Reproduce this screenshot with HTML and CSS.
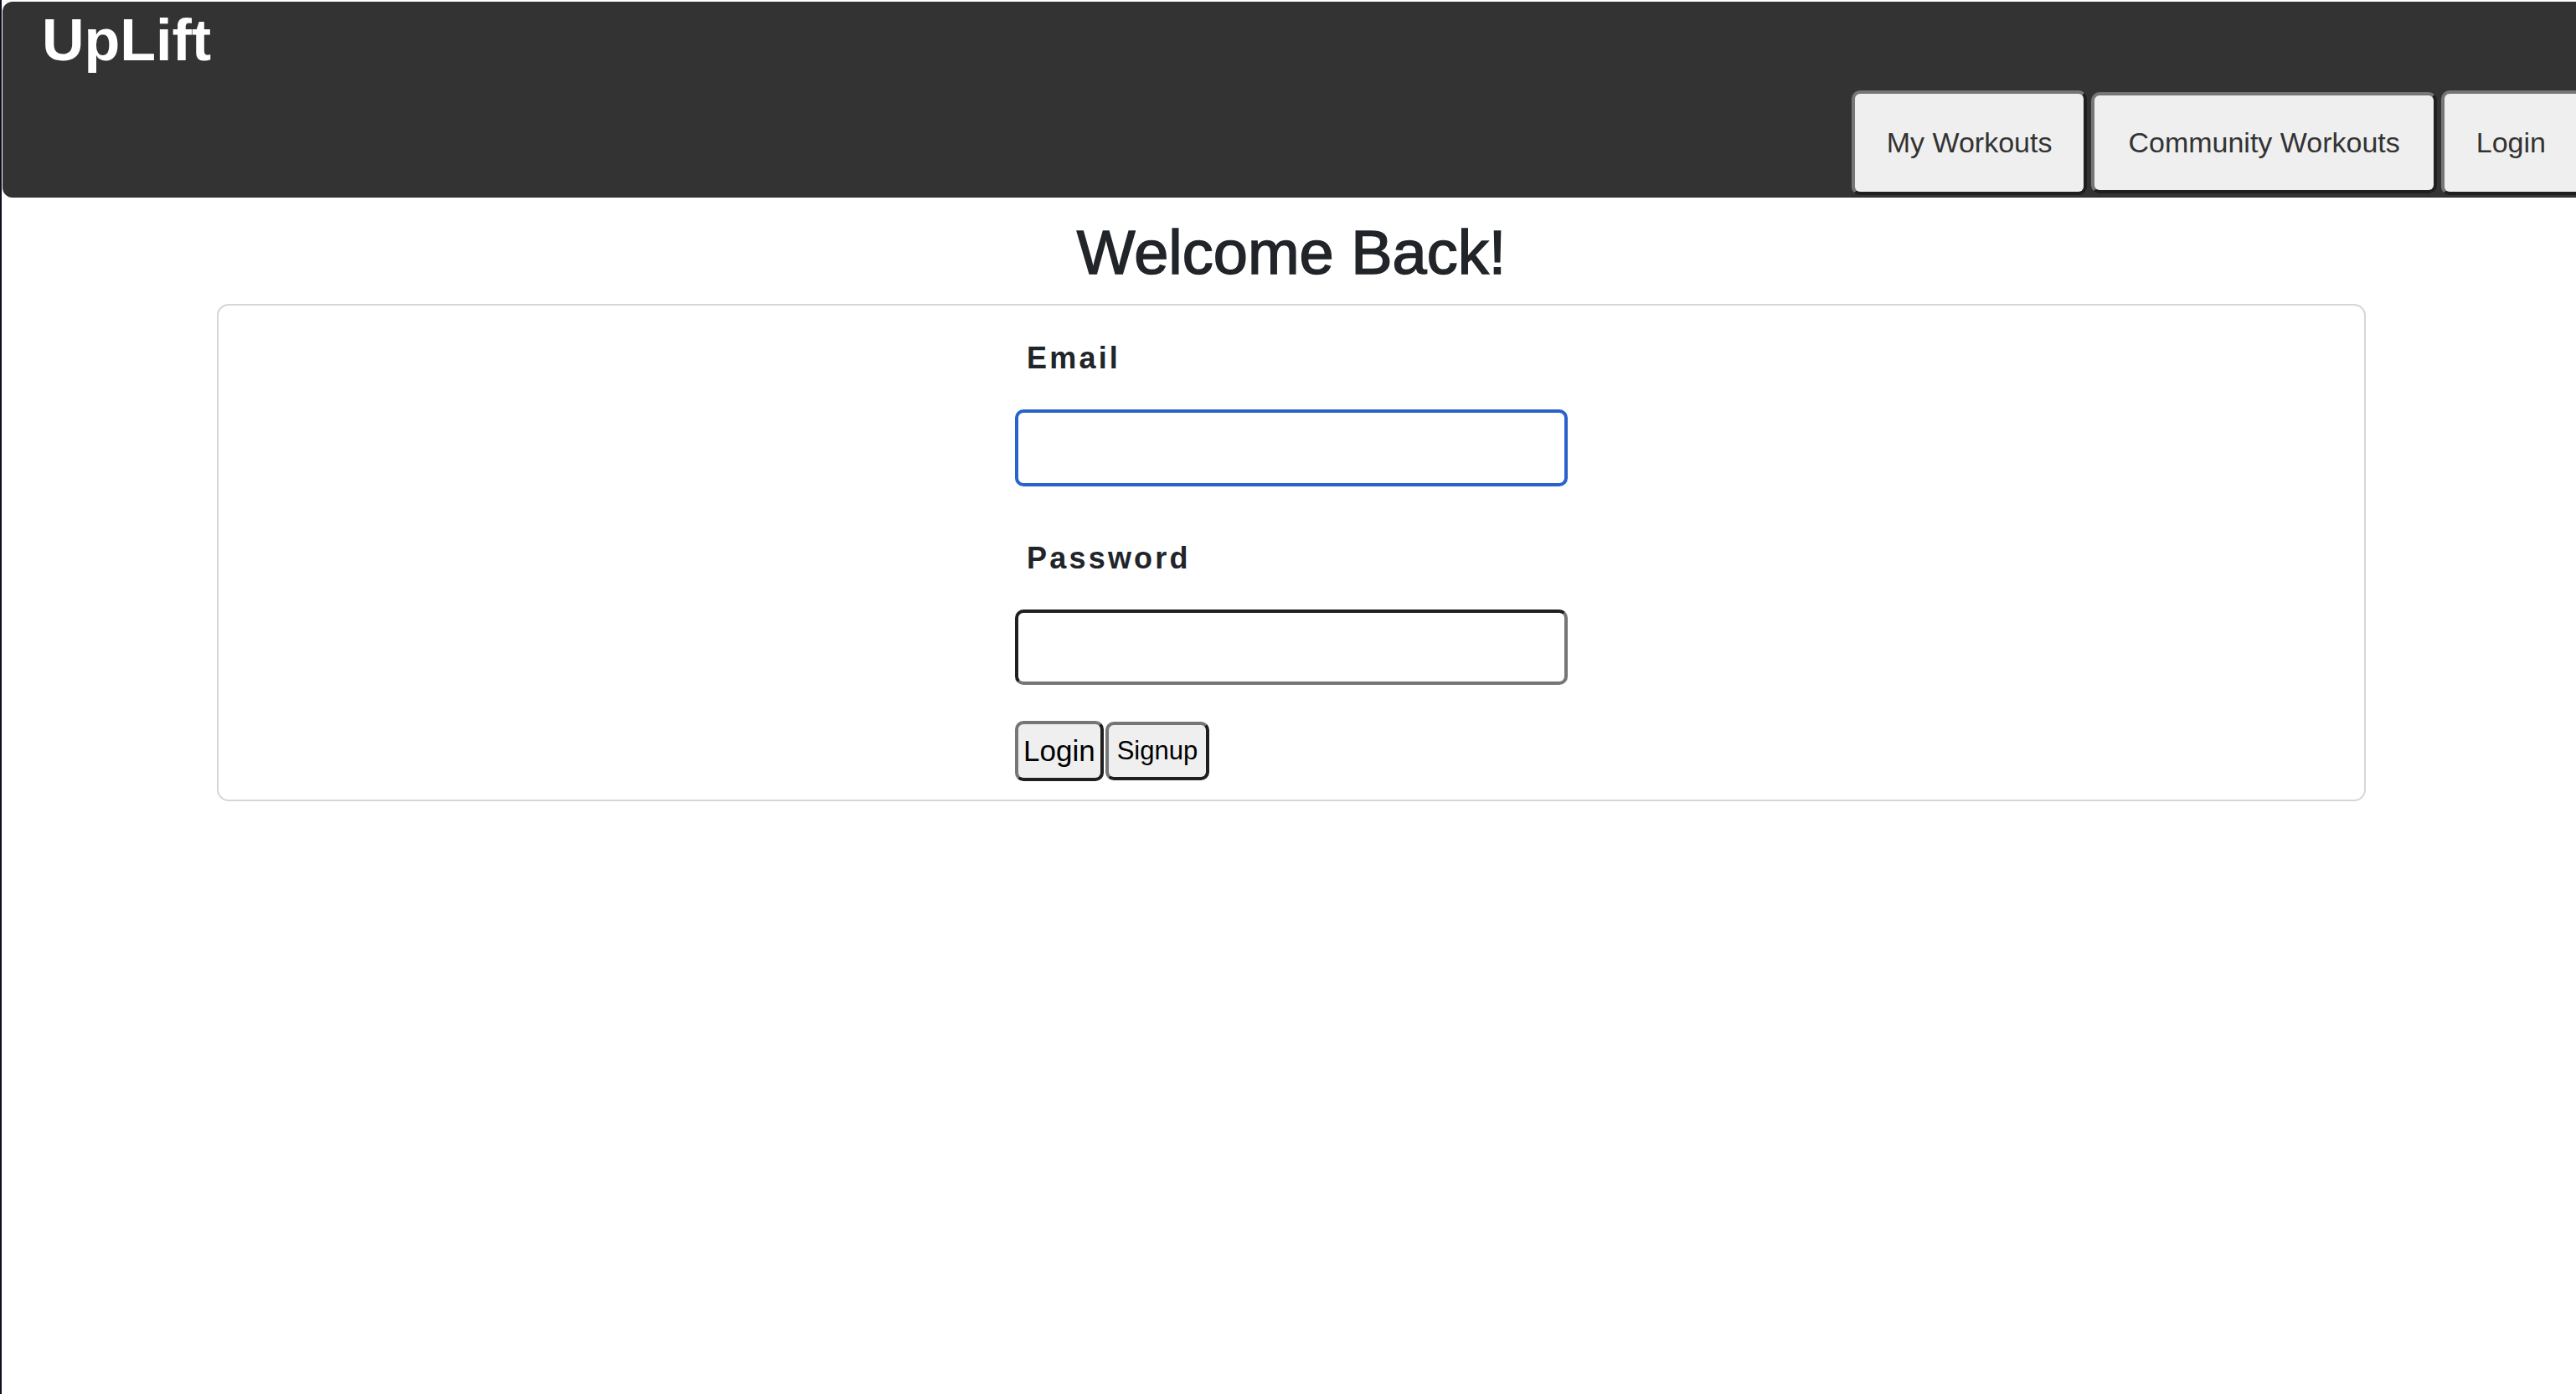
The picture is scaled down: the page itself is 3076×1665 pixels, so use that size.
FILE: index.html
```html
<!DOCTYPE html>
<html lang="en">
<head>
<meta charset="utf-8">
<title>UpLift - Login</title>
<link rel="stylesheet" href="styles.css">
</head>
<body>
<header class="topbar">
  <h1 class="brand">UpLift</h1>
  <nav class="nav">
    <button class="nav-btn" type="button">My Workouts</button>
    <button class="nav-btn nav-btn-wide" type="button">Community Workouts</button>
    <button class="nav-btn nav-btn-last" type="button">Login</button>
  </nav>
</header>
<main class="page">
  <h2 class="title">Welcome Back!</h2>
  <section class="card">
    <form class="login-form">
      <label class="field-label" for="email">Email</label>
      <input id="email" class="field-input field-focus" type="email">
      <label class="field-label" for="password">Password</label>
      <input id="password" class="field-input field-last" type="password">
      <div class="actions">
        <button class="btn btn-login" type="submit">Login</button>
        <button class="btn btn-signup" type="button">Signup</button>
      </div>
    </form>
  </section>
</main>
</body>
</html>
```
FILE: styles.css
```css
html, body {
  margin: 0;
  padding: 0;
}

body {
  background: #ffffff;
  border-left: 2px solid #0e0e1c;
  min-height: 100vh;
  box-sizing: border-box;
  overflow-x: hidden;
  font-family: "Liberation Sans", Arial, Helvetica, sans-serif;
}

.topbar {
  display: flex;
  justify-content: space-between;
  align-items: flex-start;
  height: 234px;
  margin: 2px -10px 0 1px;
  padding: 0 0 3px 47px;
  box-sizing: border-box;
  background: #333333;
  border-radius: 12px 0 0 12px;
}

.brand {
  margin: 11px 0 0;
  font-size: 70px;
  line-height: 1;
  font-weight: 700;
  color: #ffffff;
}

.nav {
  display: flex;
  align-self: flex-end;
  align-items: center;
  gap: 5px;
}

.nav-btn {
  height: 125px;
  padding: 0 38px;
  background: #efefef;
  border: 4px solid;
  border-color: #767676 #1f1f1f #1f1f1f #767676;
  border-radius: 10px;
  font-family: "Liberation Sans", Arial, sans-serif;
  font-size: 34px;
  color: #333333;
  white-space: nowrap;
}

.nav-btn-wide {
  height: 121px;
  padding: 0 40px;
}

.nav-btn-last {
  padding: 0 42px 0 38px;
}

.page {
  padding-left: 6px;
}

.title {
  margin: 22px 0 16px;
  text-align: center;
  font-size: 74px;
  line-height: 1.2;
  font-weight: 400;
  color: #212529;
  -webkit-text-stroke: 1.5px #212529;
}

.card {
  width: 2566px;
  box-sizing: border-box;
  margin: 0 auto;
  padding: 41px 0 22px;
  border: 2px solid #d6d6d6;
  border-radius: 14px;
}

.login-form {
  width: 660px;
  margin: 0 auto;
  display: flex;
  flex-direction: column;
}

.field-label {
  padding-left: 14px;
  margin-bottom: 40px;
  font-size: 36px;
  line-height: 1.2;
  font-weight: 700;
  letter-spacing: 3.2px;
  color: #212529;
}

.field-input {
  height: 92px;
  box-sizing: border-box;
  margin: 0 0 64px;
  padding: 0 12px;
  border: 4px solid;
  border-color: #1f1f1f #767676 #767676 #1f1f1f;
  border-radius: 10px;
  background: #ffffff;
  font-size: 32px;
}

.field-focus {
  border-color: #2763c9;
}

.field-last {
  height: 90px;
  margin-bottom: 43px;
}

.actions {
  display: flex;
  align-items: center;
  gap: 2px;
}

.btn {
  background: #efefef;
  border: 4px solid;
  border-color: #767676 #1f1f1f #1f1f1f #767676;
  border-radius: 10px;
  color: #000000;
  font-family: "Liberation Sans", Arial, sans-serif;
}

.btn-login {
  height: 72px;
  padding: 0 6px;
  font-size: 35px;
}

.btn-signup {
  height: 70px;
  padding: 0 10px;
  font-size: 31px;
}
```
